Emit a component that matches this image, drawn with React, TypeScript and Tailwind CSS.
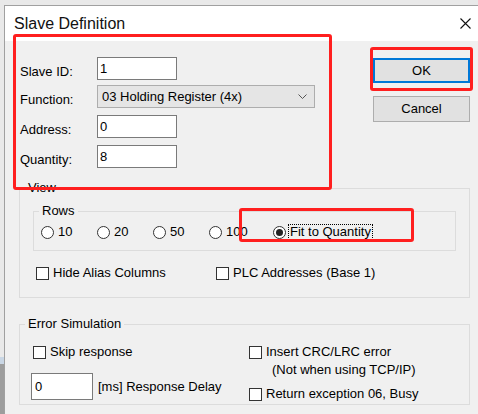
import React from 'react';

// Classic Win32 dialog for defining a Modbus slave
const Radio = ({ checked, label, width, focused }: { checked?: boolean; label: string; width?: string; focused?: boolean }) => (
  <div className={`flex items-center ${width ?? ''}`}>
    <span className="flex h-[13px] w-[13px] items-center justify-center rounded-full border border-[#333] bg-white">
      {checked && <span className="h-[7px] w-[7px] rounded-full bg-[#222]" />}
    </span>
    {focused ? (
      <span className="ml-[2px] border border-dotted border-black px-[1px] leading-[14px]">{label}</span>
    ) : (
      <span className="ml-[4px]">{label}</span>
    )}
  </div>
);

const Check = ({ label, width }: { label: string; width?: string }) => (
  <div className={`flex items-center ${width ?? ''}`}>
    <span className="h-[13px] w-[13px] border border-[#333] bg-white" />
    <span className="ml-[4px] whitespace-nowrap">{label}</span>
  </div>
);

const Field = ({ value, width = 'w-[80px]' }: { value: string; width?: string }) => (
  <input
    readOnly
    value={value}
    className={`h-[23px] ${width} border border-[#7a7a7a] bg-white pl-[2px] outline-none`}
  />
);

const Label = ({ children }: { children: React.ReactNode }) => (
  <span className="w-[77px] pt-[7px]">{children}</span>
);

export default function App() {
  return (
    <div className="relative flex h-[414px] w-[478px] overflow-hidden bg-[#e9e9e9] font-['Liberation_Sans',Arial,sans-serif] text-[13px] leading-[16px] text-black">
      {/* desktop edge showing behind the dialog */}
      <div className="flex w-[4px] flex-col">
        <div className="h-[357px] bg-[#e9e9e9]" />
        <div className="h-[7px] bg-[#c9d6e4]" />
        <div className="flex-1 bg-[#9d9d9d]" />
      </div>

      <div className="flex flex-1 flex-col pt-[5px]">
        <div className="flex flex-1 flex-col border-l border-t border-[#a0a0a0]">
          {/* title bar */}
          <div className="flex h-[35px] items-center justify-between bg-white pl-[9px] pr-[7px]">
            <span className="pt-[1px] text-[16px] leading-[20px] text-[#111]">Slave Definition</span>
            <svg width="11" height="11" viewBox="0 0 11 11" className="mb-[1px]">
              <path d="M0.5 0.5 L10.5 10.5 M10.5 0.5 L0.5 10.5" stroke="#111" strokeWidth="1.1" fill="none" />
            </svg>
          </div>

          {/* dialog body */}
          <div className="flex flex-1 flex-col bg-[#f0f0f0]">
            <div className="flex justify-between pr-[8px] pt-[16px]">
              <div className="flex flex-col pl-[15px]">
                <div className="flex h-[23px] items-center">
                  <Label>Slave ID:</Label>
                  <Field value="1" />
                </div>
                <div className="mt-[5px] flex h-[23px] items-center">
                  <Label>Function:</Label>
                  <div className="flex h-[23px] w-[218px] items-center justify-between border border-[#adadad] bg-[#e5e5e5] pl-[4px] pr-[7px]">
                    <span>03 Holding Register (4x)</span>
                    <svg width="9" height="5" viewBox="0 0 9 5">
                      <path d="M0.5 0.5 L4.5 4.5 L8.5 0.5" stroke="#555" strokeWidth="1" fill="none" />
                    </svg>
                  </div>
                </div>
                <div className="mt-[7px] flex h-[23px] items-center">
                  <Label>Address:</Label>
                  <Field value="0" />
                </div>
                <div className="mt-[7px] flex h-[23px] items-center">
                  <Label>Quantity:</Label>
                  <Field value="8" />
                </div>
              </div>

              <div className="mt-[1px] flex flex-col">
                <button className="h-[25px] w-[97px] border-2 border-[#0078d7] bg-[#e1e1e1] font-normal">OK</button>
                <button className="mt-[13px] h-[26px] w-[97px] border border-[#adadad] bg-[#e1e1e1] font-normal">Cancel</button>
              </div>
            </div>

            {/* View group */}
            <fieldset className="ml-[14px] mr-[8px] mt-[12px] border border-[#dcdcdc] pb-[16px]">
              <legend className="ml-[5px] px-[3px]">View</legend>
              <fieldset className="mx-[13px] mt-[7px] border border-[#dcdcdc] pb-[10px]">
                <legend className="ml-[5px] px-[3px]">Rows</legend>
                <div className="mt-[5px] flex items-center pl-[7px]">
                  <Radio label="10" width="w-[56px]" />
                  <Radio label="20" width="w-[56px]" />
                  <Radio label="50" width="w-[56px]" />
                  <Radio label="100" width="w-[64px]" />
                  <Radio label="Fit to Quantity" checked focused />
                </div>
              </fieldset>
              <div className="mt-[14px] flex pl-[16px]">
                <Check label="Hide Alias Columns" width="w-[180px]" />
                <Check label="PLC Addresses (Base 1)" />
              </div>
            </fieldset>

            {/* Error Simulation group */}
            <fieldset className="ml-[14px] mr-[8px] mt-[18px] border border-[#dcdcdc] pb-[2px]">
              <legend className="ml-[5px] px-[3px]">Error Simulation</legend>
              <div className="flex">
                <div className="flex w-[229px] flex-col pl-[11px]">
                  <div className="ml-[2px] mt-[12px]">
                    <Check label="Skip response" />
                  </div>
                  <div className="mt-[13px] flex items-center">
                    <input readOnly value="0" className="h-[27px] w-[62px] border border-[#7a7a7a] bg-white pl-[3px] outline-none" />
                    <span className="ml-[5px]">[ms] Response Delay</span>
                  </div>
                </div>
                <div className="flex flex-col">
                  <div className="mt-[12px]">
                    <Check label="Insert CRC/LRC error" />
                  </div>
                  <span className="mt-[2px] pl-[23px]">(Not when using TCP/IP)</span>
                  <div className="mt-[8px]">
                    <Check label="Return exception 06, Busy" />
                  </div>
                </div>
              </div>
            </fieldset>
          </div>
        </div>
      </div>

      {/* red callout marks */}
      <div className="absolute left-[13px] top-[34px] h-[156px] w-[319px] rounded-[3px] border-[3px] border-[#ff1f1f]" />
      <div className="absolute left-[370px] top-[47px] h-[44px] w-[103px] rounded-[3px] border-[3px] border-[#ff1f1f]" />
      <div className="absolute left-[239px] top-[208px] h-[34px] w-[175px] rounded-[3px] border-[3px] border-[#ff1f1f]" />
    </div>
  );
}
